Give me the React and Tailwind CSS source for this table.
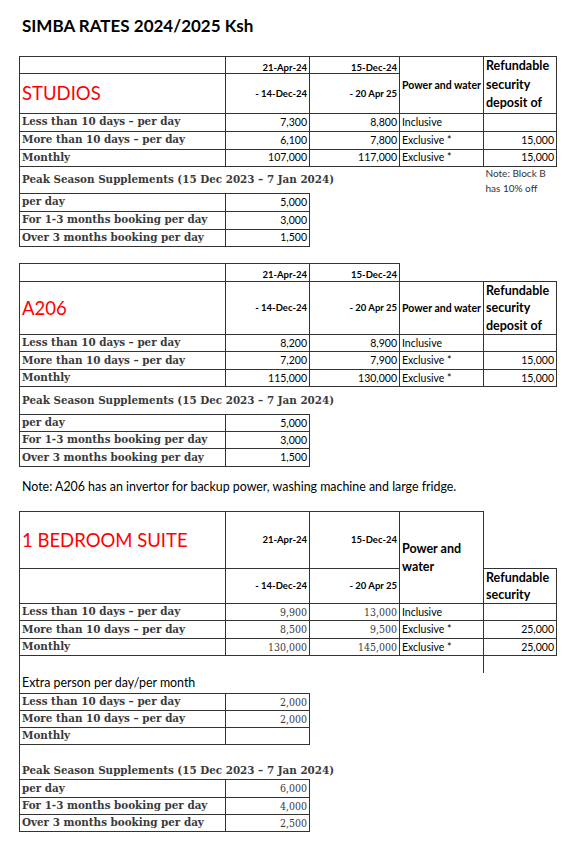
const B = 'border border-[#333]';
const SANS = "font-['Lato',sans-serif]";
const SERIF = "font-['DejaVu_Serif_Condensed','DejaVu_Serif',serif] font-stretch-condensed";

function Cols() {
  return (
    <colgroup>
      <col className="w-[206px]" />
      <col className="w-[84px]" />
      <col className="w-[90px]" />
      <col className="w-[84px]" />
      <col className="w-[73px]" />
    </colgroup>
  );
}

const rowH = { 17: 'h-[17px]', 18: 'h-[18px]' };

function Label({ children }) {
  return (
    <td className={`${B} ${SERIF} px-[2px] py-0 text-[11.5px] font-bold text-[#3a3a3a] leading-none whitespace-nowrap`}>
      {children}
    </td>
  );
}

function Num({ children, serif }) {
  return (
    <td
      className={`${B} ${serif ? SERIF + ' text-[#3a3a3a]' : SANS + ' text-black'} px-[2px] py-0 text-right text-[10.5px] leading-none`}
    >
      {children}
    </td>
  );
}

function Txt({ children }) {
  return (
    <td className={`${B} ${SANS} px-[2px] py-0 text-[10.5px] leading-none text-black whitespace-nowrap`}>{children}</td>
  );
}

function DataRows({ rows, serif, heights }) {
  return rows.map((r, i) => (
    <tr key={r[0]} className={rowH[heights[i]]}>
      <Label>{r[0]}</Label>
      <Num serif={serif}>{r[1]}</Num>
      <Num serif={serif}>{r[2]}</Num>
      <Txt>{r[3]}</Txt>
      <Num>{r[4]}</Num>
    </tr>
  ));
}

function SubRows({ rows, serif, heights }) {
  return rows.map((r, i) => (
    <tr key={r[0]} className={rowH[heights[i]]}>
      <Label>{r[0]}</Label>
      <Num serif={serif}>{r[1]}</Num>
      <td colSpan={3} className="p-0" />
    </tr>
  ));
}

function PeakRow({ note, h }) {
  return (
    <tr className={h}>
      <td colSpan={4} className={`border-l border-[#333] ${SERIF} px-[2px] py-0 text-[11.5px] font-bold leading-none text-[#3a3a3a] whitespace-nowrap`}>
        Peak Season Supplements (15 Dec 2023 – 7 Jan 2024)
      </td>
      <td className="p-0 align-top">
        {note && (
          <div className={`-mt-[1px] h-[27px] overflow-visible px-[2px] ${SANS} text-[10px] leading-[15px] text-[#333]`}>
            Note: Block B
            <br />
            has 10% off
          </div>
        )}
      </td>
    </tr>
  );
}

const headDate = `${B} ${SANS} px-[2px] py-0 text-right text-[9.5px] font-bold leading-none text-black whitespace-nowrap`;
const power = `${B} ${SANS} px-[2px] py-0 text-[10.5px] font-bold leading-none text-black whitespace-nowrap`;
const refund = `${B} ${SANS} px-[2px] py-0 text-[12.5px] font-bold leading-[17.5px] text-black`;
const unit = `${B} ${SANS} px-[2px] py-0 text-[18.5px] leading-none text-[#ff0000] whitespace-nowrap`;

const peak = [
  ['per day', '5,000'],
  ['For 1-3 months booking per day', '3,000'],
  ['Over 3 months booking per day', '1,500'],
];

export default function App() {
  return (
    <div className="min-h-[843px] w-[580px] bg-white pl-[19px] pt-[15px]">
      <h1 className={`${SANS} pl-[3px] text-[17px] font-bold leading-[22px] text-black`}>SIMBA RATES 2024/2025 Ksh</h1>

      {/* Studios */}
      <table className="mt-[19px] w-[537px] table-fixed border-collapse">
        <Cols />
        <tbody>
          <tr className="h-[17px]">
            <td className={B} />
            <td className={`${headDate} align-bottom pb-[1px]`}>21-Apr-24</td>
            <td className={`${headDate} align-bottom pb-[1px]`}>15-Dec-24</td>
            <td rowSpan={2} className={power}>Power and water</td>
            <td rowSpan={2} className={`${refund} leading-[18.5px]`}>Refundable security deposit of</td>
          </tr>
          <tr className="h-[39px]">
            <td className={unit}>STUDIOS</td>
            <td className={headDate}>- 14-Dec-24</td>
            <td className={headDate}>- 20 Apr 25</td>
          </tr>
          <DataRows
            heights={[18, 18, 17]}
            rows={[
              ['Less than 10 days – per day', '7,300', '8,800', 'Inclusive', ''],
              ['More than 10 days – per day', '6,100', '7,800', 'Exclusive *', '15,000'],
              ['Monthly', '107,000', '117,000', 'Exclusive *', '15,000'],
            ]}
          />
          <PeakRow note h="h-[27px]" />
          <SubRows rows={peak} heights={[18, 18, 17]} />
        </tbody>
      </table>

      {/* A206 */}
      <table className="mt-[16px] w-[537px] table-fixed border-collapse">
        <Cols />
        <tbody>
          <tr className="h-[18px]">
            <td className={B} />
            <td className={`${headDate} align-bottom pb-[1px]`}>21-Apr-24</td>
            <td className={`${headDate} align-bottom pb-[1px]`}>15-Dec-24</td>
            <td colSpan={2} className="p-0" />
          </tr>
          <tr className="h-[53px]">
            <td className={unit}>A206</td>
            <td className={headDate}>- 14-Dec-24</td>
            <td className={headDate}>- 20 Apr 25</td>
            <td className={power}>Power and water</td>
            <td className={refund}>Refundable security deposit of</td>
          </tr>
          <DataRows
            heights={[17, 18, 17]}
            rows={[
              ['Less than 10 days – per day', '8,200', '8,900', 'Inclusive', ''],
              ['More than 10 days – per day', '7,200', '7,900', 'Exclusive *', '15,000'],
              ['Monthly', '115,000', '130,000', 'Exclusive *', '15,000'],
            ]}
          />
          <PeakRow h="h-[28px]" />
          <SubRows rows={peak} heights={[17, 17, 18]} />
        </tbody>
      </table>

      <p className={`${SANS} mt-[12px] pl-[3px] text-[12.4px] leading-[15px] text-black`}>
        Note: A206 has an invertor for backup power, washing machine and large fridge.
      </p>

      {/* 1 Bedroom suite */}
      <table className="mt-[17px] w-[537px] table-fixed border-collapse">
        <Cols />
        <tbody>
          <tr className="h-[57px]">
            <td className={unit}>1 BEDROOM SUITE</td>
            <td className={headDate}>21-Apr-24</td>
            <td className={headDate}>15-Dec-24</td>
            <td rowSpan={2} className={`${B} ${SANS} px-[2px] py-0 text-[12.5px] font-bold leading-[18px] text-black`}>
              Power and
              <br />
              water
            </td>
            <td className="p-0" />
          </tr>
          <tr className="h-[34px]">
            <td className={B} />
            <td className={headDate}>- 14-Dec-24</td>
            <td className={headDate}>- 20 Apr 25</td>
            <td className={`${B} ${SANS} px-[2px] py-0 text-[12.5px] font-bold leading-[17px] text-black`}>
              Refundable security
            </td>
          </tr>
          <DataRows
            serif
            heights={[17, 18, 17]}
            rows={[
              ['Less than 10 days – per day', '9,900', '13,000', 'Inclusive', ''],
              ['More than 10 days – per day', '8,500', '9,500', 'Exclusive *', '25,000'],
              ['Monthly', '130,000', '145,000', 'Exclusive *', '25,000'],
            ]}
          />
          <tr className="h-[17px]">
            <td colSpan={4} className="border-x border-[#333] p-0" />
            <td className="p-0" />
          </tr>
          <tr className="h-[21px]">
            <td colSpan={5} className={`border-l border-[#333] ${SANS} px-[2px] py-0 text-[12.4px] leading-none text-black whitespace-nowrap`}>
              Extra person per day/per month
            </td>
          </tr>
          <SubRows
            serif
            heights={[17, 17, 17]}
            rows={[
              ['Less than 10 days – per day', '2,000'],
              ['More than 10 days – per day', '2,000'],
              ['Monthly', ''],
            ]}
          />
          <tr className="h-[35px]">
            <td colSpan={5} className={`border-l border-[#333] ${SERIF} px-[2px] pb-[3px] align-bottom text-[11.5px] font-bold leading-none text-[#3a3a3a] whitespace-nowrap`}>
              Peak Season Supplements (15 Dec 2023 – 7 Jan 2024)
            </td>
          </tr>
          <SubRows
            serif
            heights={[18, 17, 17]}
            rows={[
              ['per day', '6,000'],
              ['For 1-3 months booking per day', '4,000'],
              ['Over 3 months booking per day', '2,500'],
            ]}
          />
        </tbody>
      </table>
    </div>
  );
}
